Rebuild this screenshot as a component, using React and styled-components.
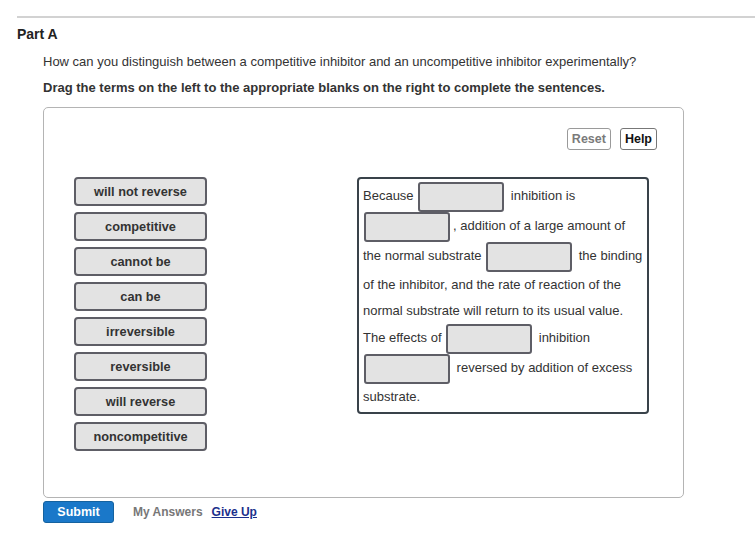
import React from 'react';
import styled, { createGlobalStyle } from 'styled-components';

const GlobalStyle = createGlobalStyle`
  body {
    margin: 0;
    background: #fff;
    font-family: "Liberation Sans", Arial, Helvetica, sans-serif;
    color: #333;
  }
`;

const TERMS = [
  'will not reverse',
  'competitive',
  'cannot be',
  'can be',
  'irreversible',
  'reversible',
  'will reverse',
  'noncompetitive',
];

const App = () => (
  <Page>
    <GlobalStyle />
    <Rule />
    <Title>Part A</Title>
    <Content>
      <Question>
        How can you distinguish between a competitive inhibitor and an uncompetitive inhibitor experimentally?
      </Question>
      <Instruction>
        Drag the terms on the left to the appropriate blanks on the right to complete the sentences.
      </Instruction>
      <Panel>
        <Toolbar>
          <ToolButton muted>Reset</ToolButton>
          <ToolButton>Help</ToolButton>
        </Toolbar>
        <Body>
          <TermList>
            {TERMS.map((t) => (
              <Term key={t}>{t}</Term>
            ))}
          </TermList>
          <Sentences>
            Because <Blank /> inhibition is <Blank />, addition of a large amount of the
            normal substrate <Blank /> the binding of the inhibitor, and the rate of reaction of
            the normal substrate will return to its usual value. The effects of <Blank /> inhibition{' '}
            <Blank /> reversed by addition of excess substrate.
          </Sentences>
        </Body>
      </Panel>
      <Actions>
        <Submit>Submit</Submit>
        <MyAnswers>My Answers</MyAnswers>
        <GiveUp href="#">Give Up</GiveUp>
      </Actions>
    </Content>
  </Page>
);

export default App;

const Page = styled.div`
  padding: 16px 0 0 17px;
`;

const Rule = styled.div`
  height: 2px;
  background: #d2d2d2;
`;

const Title = styled.h2`
  margin: 8px 0 0;
  font-size: 14px;
  line-height: 17px;
  font-weight: bold;
  color: #222;
`;

const Content = styled.div`
  padding-left: 26px;
`;

const Question = styled.p`
  margin: 11px 0 0;
  font-size: 13px;
  line-height: 16px;
  color: #333;
`;

const Instruction = styled.p`
  margin: 10px 0 0;
  font-size: 13px;
  line-height: 16px;
  font-weight: bold;
  color: #333;
`;

const Panel = styled.div`
  margin-top: 11px;
  width: 641px;
  height: 391px;
  box-sizing: border-box;
  border: 1px solid #b4b4b4;
  border-radius: 5px;
  padding: 20px 26px 0 30px;
`;

const Toolbar = styled.div`
  display: flex;
  justify-content: flex-end;
  gap: 9px;
`;

const ToolButton = styled.button`
  font-family: inherit;
  font-size: 12.5px;
  font-weight: bold;
  height: 22px;
  padding: 0 4px;
  background: #fff;
  color: ${(p) => (p.muted ? '#7a7a7a' : '#111')};
  border: 1px solid ${(p) => (p.muted ? '#9a9a9a' : '#777')};
  border-radius: 3px;
`;

const Body = styled.div`
  display: flex;
  margin-top: 27px;
`;

const TermList = styled.div`
  display: flex;
  flex-direction: column;
  gap: 6px;
  width: 133px;
`;

const Term = styled.div`
  box-sizing: border-box;
  height: 29px;
  border: 2px solid #5e5e66;
  border-radius: 4px;
  background: #e3e3e3;
  display: flex;
  align-items: center;
  justify-content: center;
  font-size: 12.75px;
  font-weight: bold;
  color: #333;
`;

const Sentences = styled.div`
  margin-left: 150px;
  width: 292px;
  height: 237px;
  box-sizing: border-box;
  border: 2px solid #39424a;
  border-radius: 4px;
  padding: 3px 3px 0 4px;
  font-size: 13px;
  line-height: 26px;
  color: #333;
`;

const Blank = styled.span`
  display: inline-block;
  box-sizing: border-box;
  width: 86px;
  height: 30px;
  margin: 0 3px 0 1px;
  vertical-align: middle;
  background: #e3e3e3;
  border: 2px solid #5e5e66;
  border-radius: 3px;
`;

const Actions = styled.div`
  display: flex;
  align-items: center;
  margin-top: 3px;
`;

const Submit = styled.button`
  font-family: inherit;
  width: 71px;
  height: 22px;
  background: #1a78c9;
  color: #fff;
  border: 1px solid #15629f;
  border-radius: 3px;
  font-size: 12.5px;
  font-weight: bold;
`;

const MyAnswers = styled.span`
  margin-left: 19px;
  font-size: 12px;
  font-weight: bold;
  color: #777;
`;

const GiveUp = styled.a`
  margin-left: 9px;
  font-size: 12px;
  font-weight: bold;
  color: #1b2f8c;
  text-decoration: underline;
`;
